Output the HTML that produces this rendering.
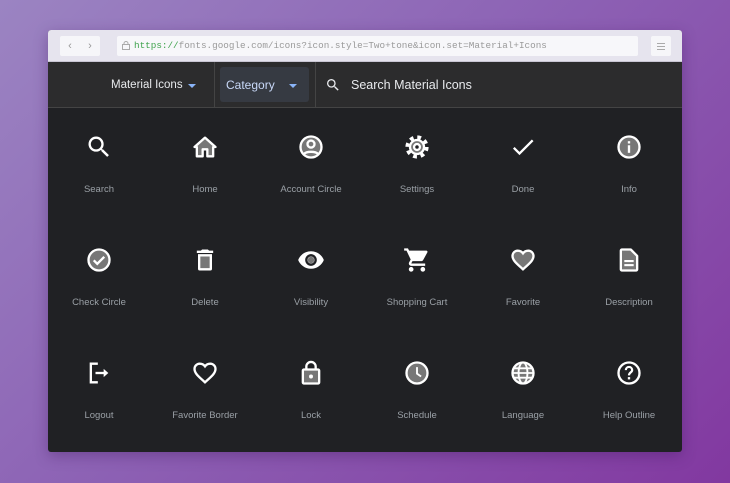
<!DOCTYPE html>
<html><head><meta charset="utf-8"><style>
*{margin:0;padding:0;box-sizing:border-box}
body{width:730px;height:483px;overflow:hidden;background:linear-gradient(135deg,#9b84c2 0%,#8d63b5 45%,#8238a0 100%);font-family:"Liberation Sans",sans-serif;position:relative}
.win{position:absolute;left:48px;top:30px;width:634px;height:422px;background:#202124;border-radius:3px;overflow:hidden;box-shadow:0 4px 14px rgba(60,20,90,.35)}
.tb{position:absolute;left:0;top:0;width:634px;height:32px;background:#e6e4ee;border-bottom:1px solid #c9c6d3}
.nav{position:absolute;left:12px;top:6px;width:40px;height:20px;background:#f6f6f9;border-radius:2px;font-size:11px;color:#999;display:flex}
.nav span{flex:1;text-align:center;line-height:20px}
.url{position:absolute;left:69px;top:6px;width:521px;height:20px;background:#f7f7fa;border-radius:2px;font-family:"Liberation Mono",monospace;font-size:9.3px;color:#9a9a9a;line-height:20px;padding-left:17px;white-space:nowrap;overflow:hidden}
.url b{font-weight:normal;color:#3fa34d}
.lock{position:absolute;left:5px;top:5px;width:8px;height:9px}
.menu{position:absolute;left:603px;top:6px;width:20px;height:20px;background:#f6f6f9;border-radius:2px}
.menu i{position:absolute;left:6px;width:8px;height:1px;background:#aaa}
.hd{position:absolute;left:0;top:32px;width:634px;height:46px;background:#2c2c2d;border-bottom:1px solid #444}
.d{position:absolute;top:0;width:1px;height:46px;background:#444}
.mi{position:absolute;left:63px;top:17px;font-size:11.5px;color:#e8eaed}
.cat{position:absolute;left:172px;top:5px;width:89px;height:35px;background:#363a42;border-radius:3px}
.cat span{position:absolute;left:6px;top:11px;font-size:12px;color:#c8d8f8}
.tri{position:absolute;width:0;height:0;border-left:4px solid transparent;border-right:4px solid transparent;border-top:4px solid #8ab4f8}
.srch{position:absolute;left:303px;top:16px;font-size:12.5px;color:#e8eaed}
.cell{position:absolute;width:106px;text-align:center}
.cell svg{display:block;margin:0 auto;width:28px;height:28px}
.cell p{margin-top:23px;font-size:9.5px;color:#9aa0a6}
</style></head><body>
<div class="win">
 <div class="tb">
  <div class="nav"><span>&#8249;</span><span>&#8250;</span></div>
  <div class="url"><svg class="lock" viewBox="0 0 8 9"><rect x="0.5" y="3.5" width="7" height="5" fill="none" stroke="#aaa"/><path d="M2 3.5V2.5a2 2 0 014 0v1" fill="none" stroke="#aaa"/></svg><b>https://</b>fonts.google.com/icons?icon.style=Two+tone&amp;icon.set=Material+Icons</div>
  <div class="menu"><i style="top:7px"></i><i style="top:10px"></i><i style="top:13px"></i></div>
 </div>
 <div class="hd">
  <div class="mi">Material Icons</div>
  <div class="tri" style="left:140px;top:22px"></div>
  <div class="d" style="left:166px"></div>
  <div class="cat"><span>Category</span><div class="tri" style="left:69px;top:17px"></div></div>
  <div class="d" style="left:267px"></div>
  <svg style="position:absolute;left:277px;top:15px" width="16" height="16" viewBox="0 0 24 24"><path fill="#e8eaed" d="M15.5 14h-.79l-.28-.27A6.47 6.47 0 0016 9.5 6.5 6.5 0 109.5 16c1.61 0 3.09-.59 4.23-1.57l.27.28v.79l5 4.99L20.49 19l-4.99-5zm-6 0C7.01 14 5 11.99 5 9.5S7.01 5 9.5 5 14 7.01 14 9.5 11.99 14 9.5 14z"/></svg>
  <div class="srch">Search Material Icons</div>
 </div>

 <div class="cell" style="left:-2px;top:103px"><svg viewBox="0 0 24 24"><path fill="#fff" d="M15.5 14h-.79l-.28-.27A6.47 6.47 0 0016 9.5 6.5 6.5 0 109.5 16c1.61 0 3.09-.59 4.23-1.57l.27.28v.79l5 4.99L20.49 19l-4.99-5zm-6 0C7.01 14 5 11.99 5 9.5S7.01 5 9.5 5 14 7.01 14 9.5 11.99 14 9.5 14z"/></svg><p>Search</p></div>
 <div class="cell" style="left:104px;top:103px"><svg viewBox="0 0 24 24"><path fill="#777" stroke="#fff" stroke-width="2" stroke-linejoin="round" d="M10 20v-6h4v6h5v-8h2L12 4 3 12h2v8z"/></svg><p>Home</p></div>
 <div class="cell" style="left:210px;top:103px"><svg viewBox="0 0 24 24"><circle cx="12" cy="12" r="9" fill="#777" stroke="#fff" stroke-width="2"/><circle cx="12" cy="9.5" r="3" fill="#777" stroke="#fff" stroke-width="2"/><path d="M6 18c2-2.5 10-2.5 12 0" stroke="#fff" stroke-width="2" fill="none"/></svg><p>Account Circle</p></div>
 <div class="cell" style="left:316px;top:103px"><svg viewBox="0 0 24 24"><circle cx="12" cy="12" r="8.2" fill="none" stroke="#fff" stroke-width="3.5" stroke-dasharray="3.2 3.24"/><circle cx="12" cy="12" r="6" fill="#777" stroke="#fff" stroke-width="2"/><circle cx="12" cy="12" r="2.5" fill="#202124" stroke="#fff" stroke-width="2"/></svg><p>Settings</p></div>
 <div class="cell" style="left:422px;top:103px"><svg viewBox="0 0 24 24"><path fill="#fff" d="M9 16.2L4.8 12l-1.4 1.4L9 19 21 7l-1.4-1.4L9 16.2z"/></svg><p>Done</p></div>
 <div class="cell" style="left:528px;top:103px"><svg viewBox="0 0 24 24"><circle cx="12" cy="12" r="9" fill="#777" stroke="#fff" stroke-width="2"/><rect x="11" y="10.5" width="2" height="6.5" fill="#fff"/><rect x="11" y="7" width="2" height="2" fill="#fff"/></svg><p>Info</p></div>

 <div class="cell" style="left:-2px;top:216px"><svg viewBox="0 0 24 24"><circle cx="12" cy="12" r="9" fill="#777" stroke="#fff" stroke-width="2"/><path d="M7.5 12.3l3 3 6-6" stroke="#fff" stroke-width="2" fill="none"/></svg><p>Check Circle</p></div>
 <div class="cell" style="left:104px;top:216px"><svg viewBox="0 0 24 24"><path fill="#777" stroke="#fff" stroke-width="2" d="M7 8h10v11.5a.5.5 0 01-.5.5h-9a.5.5 0 01-.5-.5z"/><path fill="#fff" d="M19 4h-3.5l-1-1h-5l-1 1H5v2h14V4z"/></svg><p>Delete</p></div>
 <div class="cell" style="left:210px;top:216px"><svg viewBox="0 0 24 24"><path fill="#fff" d="M12 4.5C7 4.5 2.73 7.61 1 12c1.73 4.39 6 7.5 11 7.5s9.27-3.11 11-7.5c-1.73-4.39-6-7.5-11-7.5zM12 17c-2.76 0-5-2.24-5-5s2.24-5 5-5 5 2.24 5 5-2.24 5-5 5zm0-8c-1.66 0-3 1.34-3 3s1.34 3 3 3 3-1.34 3-3-1.34-3-3-3z"/><circle cx="12" cy="12" r="2.8" fill="#777"/></svg><p>Visibility</p></div>
 <div class="cell" style="left:316px;top:216px"><svg viewBox="0 0 24 24"><path fill="#777" d="M6 6h13l-3 5.5H8z"/><path fill="#fff" d="M7 18c-1.1 0-1.99.9-1.99 2S5.9 22 7 22s2-.9 2-2-.9-2-2-2zM1 2v2h2l3.6 7.59-1.35 2.45c-.16.28-.25.61-.25.96 0 1.1.9 2 2 2h12v-2H7.42c-.14 0-.25-.11-.25-.25l.03-.12.9-1.63h7.45c.75 0 1.41-.41 1.75-1.03l3.58-6.49A1.003 1.003 0 0020 4H5.21l-.94-2H1zm16 16c-1.1 0-1.99.9-1.99 2s.89 2 1.99 2 2-.9 2-2-.9-2-2-2z"/></svg><p>Shopping Cart</p></div>
 <div class="cell" style="left:422px;top:216px"><svg viewBox="0 0 24 24"><path fill="#777" stroke="#fff" stroke-width="2" d="M12 20l-1.2-1.1C6.2 14.9 3 12 3 8.6 3 6 5 4 7.5 4c1.5 0 3.4.8 4.5 2.3C13.1 4.8 15 4 16.5 4 19 4 21 6 21 8.6c0 3.4-3.2 6.3-7.8 10.3z"/></svg><p>Favorite</p></div>
 <div class="cell" style="left:528px;top:216px"><svg viewBox="0 0 24 24"><path fill="#777" stroke="#fff" stroke-width="2" stroke-linejoin="round" d="M6 3h7.5L19 8.5V20a1 1 0 01-1 1H6a1 1 0 01-1-1V4a1 1 0 011-1z"/><rect x="8" y="12" width="8" height="1.8" fill="#fff"/><rect x="8" y="15.5" width="8" height="1.8" fill="#fff"/></svg><p>Description</p></div>

 <div class="cell" style="left:-2px;top:329px"><svg viewBox="0 0 24 24"><path d="M11 4H5v16h6" stroke="#fff" stroke-width="2" fill="none"/><path d="M9 12h9" stroke="#fff" stroke-width="2"/><path fill="#fff" d="M16 8.5l4 3.5-4 3.5z"/></svg><p>Logout</p></div>
 <div class="cell" style="left:104px;top:329px"><svg viewBox="0 0 24 24"><path fill="none" stroke="#fff" stroke-width="2" d="M12 20l-1.2-1.1C6.2 14.9 3 12 3 8.6 3 6 5 4 7.5 4c1.5 0 3.4.8 4.5 2.3C13.1 4.8 15 4 16.5 4 19 4 21 6 21 8.6c0 3.4-3.2 6.3-7.8 10.3z"/></svg><p>Favorite Border</p></div>
 <div class="cell" style="left:210px;top:329px"><svg viewBox="0 0 24 24"><path d="M8 9V6.5a4 4 0 018 0V9" stroke="#fff" stroke-width="2" fill="none"/><rect x="5" y="9" width="14" height="12" rx="1" fill="#777" stroke="#fff" stroke-width="2"/><circle cx="12" cy="15" r="1.7" fill="#fff"/></svg><p>Lock</p></div>
 <div class="cell" style="left:316px;top:329px"><svg viewBox="0 0 24 24"><circle cx="12" cy="12" r="9" fill="#777" stroke="#fff" stroke-width="2"/><path d="M12 7v5.5l3.5 2.5" stroke="#fff" stroke-width="1.6" fill="none"/></svg><p>Schedule</p></div>
 <div class="cell" style="left:422px;top:329px"><svg viewBox="0 0 24 24"><circle cx="12" cy="12" r="9" fill="#777" stroke="#fff" stroke-width="2"/><ellipse cx="12" cy="12" rx="3.8" ry="9" fill="none" stroke="#fff" stroke-width="1.6"/><path d="M3 12h18M4.5 8h15M4.5 16h15" stroke="#fff" stroke-width="1.6"/></svg><p>Language</p></div>
 <div class="cell" style="left:528px;top:329px"><svg viewBox="0 0 24 24"><circle cx="12" cy="12" r="9" fill="none" stroke="#fff" stroke-width="2"/><path d="M9.3 9.5a2.7 2.7 0 015.4 0c0 2-2.7 2-2.7 4.5" stroke="#fff" stroke-width="1.9" fill="none"/><rect x="11" y="15.5" width="2" height="2" fill="#fff"/></svg><p>Help Outline</p></div>
</div>
</body></html>
